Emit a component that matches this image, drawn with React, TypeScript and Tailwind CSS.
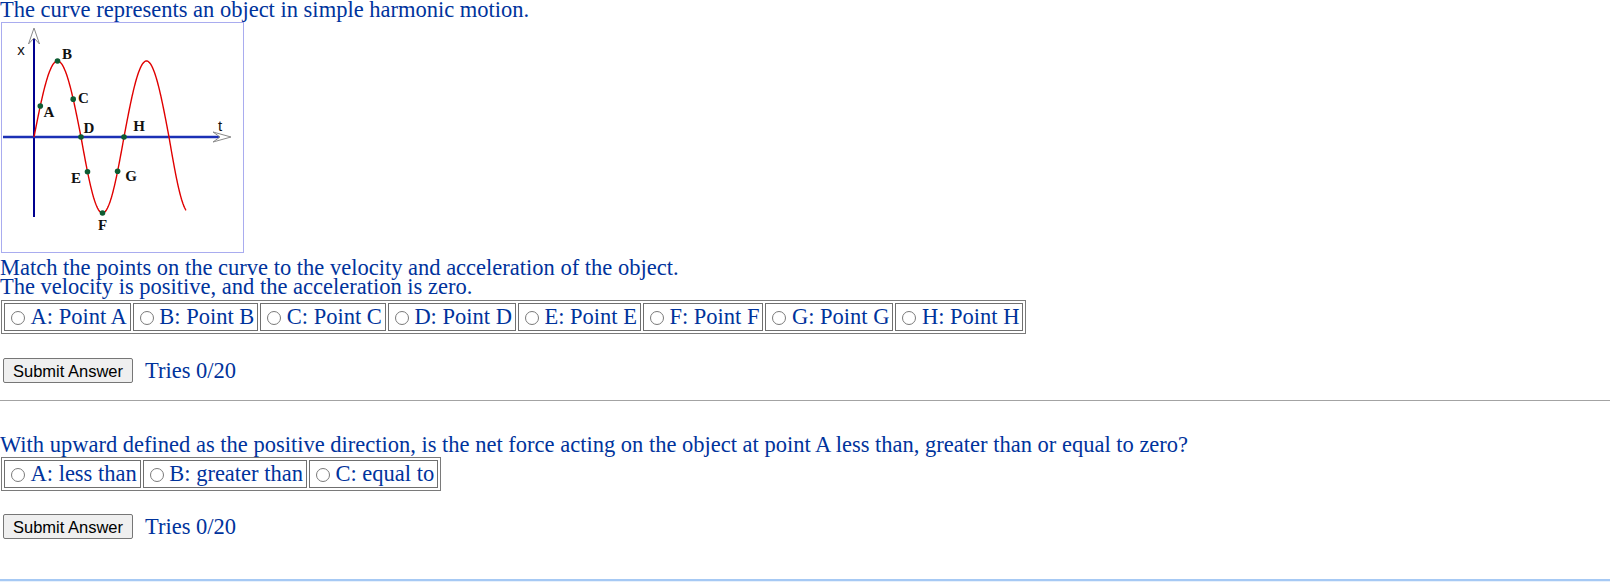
import React from "react";

// piecewise half-sine segments: [start x, end x, direction]
const segments: [number, number, number][] = [
  [34, 81, 1],
  [81, 124, -1],
  [124, 169, 1],
  [169, 210, -1],
];
const AXIS_Y = 137;
const AMP = 76;

function curveY(x: number) {
  for (const [a, b, dir] of segments) {
    if (x >= a && x <= b) {
      return AXIS_Y - dir * AMP * Math.sin((Math.PI * (x - a)) / (b - a));
    }
  }
  return AXIS_Y;
}

function curvePath() {
  const pts: string[] = [];
  for (let x = 34; x <= 186; x += 0.5) {
    pts.push(`${x.toFixed(1)},${curveY(x).toFixed(1)}`);
  }
  return "M" + pts.join(" L");
}

const dots: { x: number; lx: number; ly: number; label: string }[] = [
  { x: 40.3, lx: 49, ly: 112, label: "A" },
  { x: 57.5, lx: 67, ly: 54, label: "B" },
  { x: 73.2, lx: 83.5, ly: 98, label: "C" },
  { x: 81, lx: 89, ly: 128, label: "D" },
  { x: 87.5, lx: 76, ly: 178, label: "E" },
  { x: 102.5, lx: 102.5, ly: 225, label: "F" },
  { x: 117.6, lx: 131, ly: 176, label: "G" },
  { x: 124, lx: 139, ly: 126, label: "H" },
];

function MotionGraph() {
  return (
    <svg width="241" height="229" viewBox="2 23 241 229">
      {/* y axis */}
      <line x1="34" y1="37" x2="34" y2="217" stroke="#00008f" strokeWidth="2" />
      <polygon
        points="34,28 39.5,44 34,38 28.5,44"
        fill="white"
        stroke="#8a8a8a"
        strokeWidth="1"
      />
      {/* x axis */}
      <line x1="3" y1={AXIS_Y} x2="222" y2={AXIS_Y} stroke="#1b30b5" strokeWidth="2.5" />
      <polygon
        points="231,137 213,132 220,137 213,142"
        fill="white"
        stroke="#8a8a8a"
        strokeWidth="1"
      />
      <text x="21" y="55" fontFamily="Liberation Sans, sans-serif" fontSize="15" textAnchor="middle" fill="#111">
        x
      </text>
      <text x="220" y="131" fontFamily="Liberation Sans, sans-serif" fontSize="15" textAnchor="middle" fill="#111">
        t
      </text>
      <path d={curvePath()} fill="none" stroke="#e00000" strokeWidth="1.4" />
      {dots.map((d) => (
        <g key={d.label}>
          <circle cx={d.x} cy={curveY(d.x)} r="2.8" fill="#0d5c32" />
          <text
            x={d.lx}
            y={d.ly + 5}
            fontFamily="Liberation Serif, serif"
            fontSize="15"
            fontWeight="bold"
            textAnchor="middle"
            fill="#111"
          >
            {d.label}
          </text>
        </g>
      ))}
    </svg>
  );
}

function Choices({ options }: { options: string[] }) {
  return (
    <table className="ml-[1px] border border-[#7a7a7a] border-separate border-spacing-[2px]">
      <tbody>
        <tr>
          {options.map((opt) => (
            <td key={opt} className="border border-[#6f6f6f] p-[1px] pr-[3px] leading-[24px] whitespace-nowrap">
              <label className="flex items-center">
                {/* radio button circle */}
                <span className="block w-[14px] h-[14px] ml-[5px] mr-[5.5px] mt-[1px] rounded-full border-[1.5px] border-[#7a7a7a] bg-white shrink-0" />
                <span>{opt}</span>
              </label>
            </td>
          ))}
        </tr>
      </tbody>
    </table>
  );
}

function SubmitRow() {
  return (
    <div className="flex items-center ml-[3px]">
      <button className="h-[25px] px-[9px] bg-[#efefef] border border-[#767676] rounded-[2px] font-['Liberation_Sans',Arial,sans-serif] text-[16.5px] text-black leading-[20px]">
        Submit Answer
      </button>
      <span className="ml-[12px] leading-[22px]">Tries 0/20</span>
    </div>
  );
}

export default function App() {
  const points = ["A", "B", "C", "D", "E", "F", "G", "H"].map((p) => `${p}: Point ${p}`);

  return (
    <div className="min-h-[582px] bg-white font-['Liberation_Serif','Times_New_Roman',serif] text-[22.5px] text-[#00339c]">
      <div className="leading-[19px]">The curve represents an object in simple harmonic motion.</div>
      <div className="mt-[3px] ml-[1px] w-[243px] h-[231px] border border-[#a9acef]">
        <MotionGraph />
      </div>

      <div className="mt-[5px] leading-[19px]">
        Match the points on the curve to the velocity and acceleration of the object.
        <br />
        The velocity is positive, and the acceleration is zero.
      </div>
      <div className="mt-[4px]">
        <Choices options={points} />
      </div>
      <div className="mt-[24px]">
        <SubmitRow />
      </div>

      <hr className="mt-[17px] border-t border-[#a3a3a3]" />

      <div className="mt-[34px] leading-[19px]">
        With upward defined as the positive direction, is the net force acting on the object at point A less
        than, greater than or equal to zero?
      </div>
      <div className="mt-[3px]">
        <Choices options={["A: less than", "B: greater than", "C: equal to"]} />
      </div>
      <div className="mt-[23px]">
        <SubmitRow />
      </div>

      <div className="mt-[40px] h-[4px] border-t-2 border-[#a6c9f4] bg-[#e8f1fc]" />
    </div>
  );
}
